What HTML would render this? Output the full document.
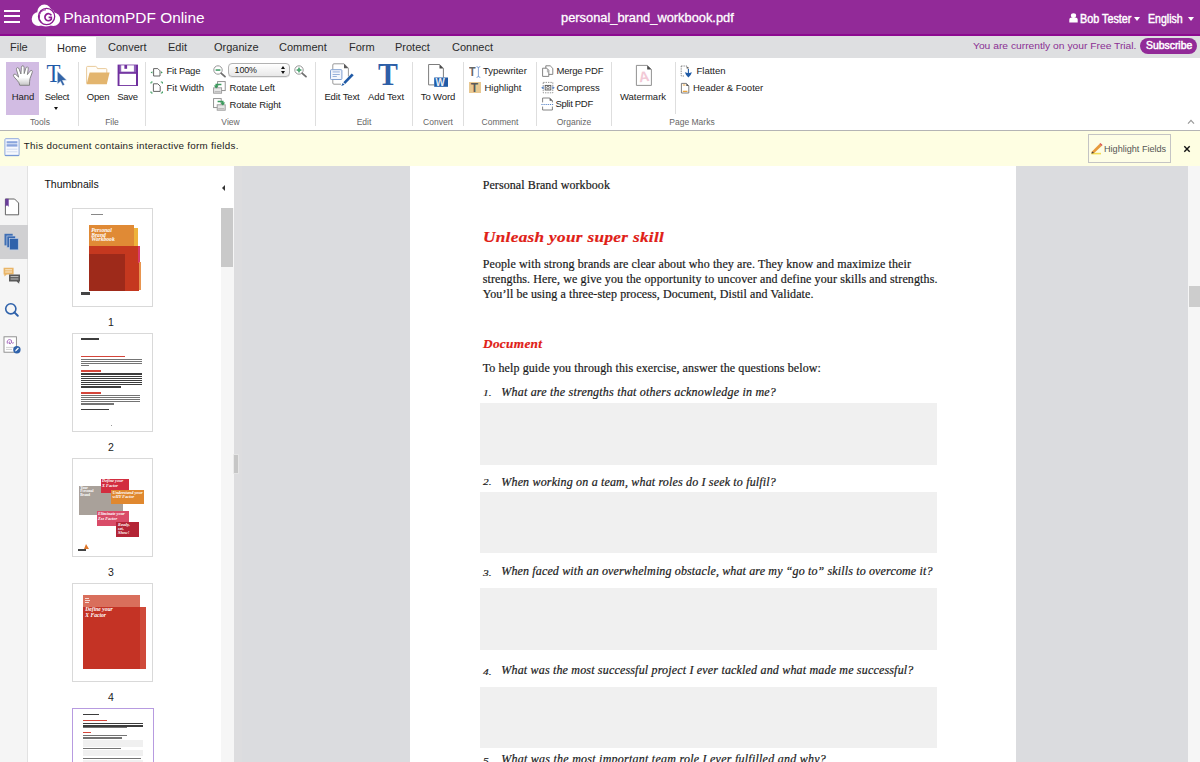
<!DOCTYPE html>
<html>
<head>
<meta charset="utf-8">
<title>PhantomPDF Online</title>
<style>
*{box-sizing:border-box;margin:0;padding:0}
html,body{width:1200px;height:762px;overflow:hidden;background:#fff;font-family:"Liberation Sans",sans-serif;}
.abs{position:absolute}
.t{position:absolute;white-space:nowrap;line-height:1;}
#top{position:absolute;left:0;top:0;width:1200px;height:34px;background:#922a98}
#topline{position:absolute;left:0;top:34px;width:1200px;height:2px;background:#8c0a90}
#tabs{position:absolute;left:0;top:36px;width:1200px;height:22px;background:#dedfe1}
#hometab{position:absolute;left:46px;top:37px;width:50px;height:22px;background:#fff}
.tab{position:absolute;top:41.2px;font-size:10.2px;color:#2b2b2b;white-space:nowrap;line-height:13px;transform:scaleX(1.08);transform-origin:left}
#ribbon{position:absolute;left:0;top:58px;width:1200px;height:72px;background:#fff}
#ribline{position:absolute;left:0;top:130px;width:1200px;height:1px;background:#b4b4b4}
.sep{position:absolute;top:62px;width:1px;height:64px;background:#dedede}
.rl{position:absolute;font-size:9.5px;color:#222;white-space:nowrap;line-height:11px}
.gl{position:absolute;top:117.1px;font-size:8.5px;color:#666;white-space:nowrap;line-height:11px;text-align:center;transform:translateX(-50%)}
.c{transform:translateX(-50%)}
#ybar{position:absolute;left:0;top:131px;width:1200px;height:35px;background:#fefee2}
#strip{position:absolute;left:0;top:166px;width:28px;height:596px;background:#f5f5f5;border-right:1px solid #e2e2e2}
#panel{position:absolute;left:28px;top:166px;width:206px;height:596px;background:#fff}
#docbg{position:absolute;left:234px;top:166px;width:953.5px;height:596px;background:#dbdcdf}
#page{position:absolute;left:410px;top:166px;width:606px;height:596px;background:#fff}
#vscroll{position:absolute;left:1187.5px;top:166px;width:12.5px;height:596px;background:#f6f6f6}
.d{position:absolute;white-space:nowrap;font-family:"Liberation Serif",serif;color:#1a1a1a;line-height:1;-webkit-text-stroke:0.2px currentColor}
.fld{position:absolute;left:479.6px;width:457px;background:#f0f0f0}
.thumb{position:absolute;left:71.5px;width:81.3px;height:99.5px;background:#fff;border:1px solid #d9d9d9}
.tn{position:absolute;left:111px;font-size:10.5px;color:#222;transform:translateX(-50%);line-height:12px}
</style>
</head>
<body>
<!-- TOP HEADER -->
<div id="top"></div>
<div id="topline"></div>
<div id="tabs"></div>
<div id="hometab"></div>
<div id="ribbon"></div>
<div id="ribline"></div>
<div id="ybar"></div>
<div id="strip"></div>
<div id="panel"></div>
<div id="docbg"></div>
<div id="page"></div>
<div id="vscroll"></div>

<!-- hamburger -->
<div class="abs" style="left:4px;top:9.5px;width:16px;height:2px;background:#fff"></div>
<div class="abs" style="left:4px;top:15px;width:16px;height:2px;background:#fff"></div>
<div class="abs" style="left:4px;top:20.5px;width:16px;height:2px;background:#fff"></div>
<!-- logo -->
<svg class="abs" style="left:30px;top:2px" width="32" height="28" viewBox="30 2 32 28">
  <g fill="#fff">
    <circle cx="38.7" cy="19" r="7"/>
    <circle cx="44.4" cy="11.6" r="7"/>
    <circle cx="53.4" cy="19.2" r="6.8"/>
    <circle cx="46.6" cy="16.5" r="8.9"/>
    <ellipse cx="46" cy="20.4" rx="9" ry="6"/>
  </g>
  <ellipse cx="46.6" cy="16.5" rx="8.1" ry="8.2" fill="none" stroke="#8b1b92" stroke-width="1.3"/>
  <path d="M41.6 22.4 A7 7.2 0 0 1 46 9.8" fill="none" stroke="#8b1b92" stroke-width="0.9"/>
  <path d="M51.4 15.4 A3.5 3.5 0 1 0 51.3 19.2 L51.3 17.3 L48.6 17.3" fill="none" stroke="#8b1b92" stroke-width="1.7"/>
</svg>
<div class="t" style="left:63.5px;top:8.5px;font-size:15.4px;color:#fff;line-height:17px">PhantomPDF Online</div>
<div class="t" style="left:561px;top:10px;font-size:12.85px;color:#fff;line-height:15px;-webkit-text-stroke:0.3px #fff">personal_brand_workbook.pdf</div>
<!-- user -->
<svg class="abs" style="left:1069px;top:13px" width="9" height="10" viewBox="0 0 9 11" preserveAspectRatio="none"><circle cx="4.5" cy="2.8" r="2.6" fill="#fff"/><path d="M0.3 10.5 V7.5 Q0.3 5 3 5 H6 Q8.7 5 8.7 7.5 V10.5 Z" fill="#fff"/></svg>
<div class="t" style="left:1080px;top:11.5px;font-size:12px;color:#fff;line-height:14px;-webkit-text-stroke:0.45px #fff;transform:scaleX(0.9);transform-origin:left" id="bob">Bob Tester</div>
<div class="abs" style="left:1134px;top:17px;width:0;height:0;border-left:3.5px solid transparent;border-right:3.5px solid transparent;border-top:4px solid #fff"></div>
<div class="t" style="left:1148px;top:11.5px;font-size:12px;color:#fff;line-height:14px;-webkit-text-stroke:0.45px #fff;transform:scaleX(0.88);transform-origin:left" id="eng">English</div>
<div class="abs" style="left:1188px;top:17px;width:0;height:0;border-left:3.5px solid transparent;border-right:3.5px solid transparent;border-top:4px solid #fff"></div>


<div class="tab" style="left:10px">File</div>
<div class="tab" style="left:56.5px;top:42px">Home</div>
<div class="tab" style="left:107.5px">Convert</div>
<div class="tab" style="left:168px">Edit</div>
<div class="tab" style="left:213.5px">Organize</div>
<div class="tab" style="left:279px">Comment</div>
<div class="tab" style="left:348.5px">Form</div>
<div class="tab" style="left:395px">Protect</div>
<div class="tab" style="left:452px">Connect</div>
<div class="t" style="left:972.5px;top:40.2px;font-size:9.9px;color:#8a2f93;line-height:12px;transform:scaleX(1.04);transform-origin:left">You are currently on your Free Trial.</div>
<div class="abs" style="left:1140px;top:38px;width:57px;height:16px;border-radius:8px;background:#922a98"></div>
<div class="t" style="left:1146px;top:40px;font-size:10.4px;color:#fff;line-height:12px;-webkit-text-stroke:0.5px #fff">Subscribe</div>


<!-- separators -->
<div class="sep" style="left:78px"></div>
<div class="sep" style="left:145px"></div>
<div class="sep" style="left:315px"></div>
<div class="sep" style="left:412px"></div>
<div class="sep" style="left:463px"></div>
<div class="sep" style="left:536px"></div>
<div class="sep" style="left:611px"></div>
<div class="sep" style="left:675px;height:52px"></div>
<!-- Tools -->
<div class="abs" style="left:6px;top:62px;width:33px;height:53px;background:#d2bce3"></div>
<svg class="abs" style="left:12px;top:64px" width="22" height="23" viewBox="12 64 22 23">
  <defs><linearGradient id="hg" x1="0" y1="0" x2="0" y2="1"><stop offset="0.6" stop-color="#ffffff"/><stop offset="1" stop-color="#c4c4c4"/></linearGradient></defs>
  <path d="M19.8 85.3 Q19.2 82.4 17.2 80.4 L14 76.8 Q12.6 74.8 14 74.2 Q15.4 73.8 16.8 75.4 L18.7 77.2 L16.5 69.8 Q16.2 67.8 17.5 67.6 Q18.7 67.6 19.2 69.2 L20.9 74 L21.4 67.4 Q21.6 65.6 22.9 65.7 Q24.1 65.8 24.1 67.6 L24.2 73.6 L25.8 68.2 Q26.4 66.6 27.5 66.9 Q28.6 67.4 28.2 69.2 L27.4 74.6 L30 71.2 Q31 69.9 31.9 70.5 Q32.8 71.2 32.1 72.8 L30 78.6 Q29.4 81.6 29.5 85.3 Z" fill="url(#hg)" stroke="#7d7d7d" stroke-width="0.9" stroke-linejoin="round"/>
</svg>
<div class="rl c" style="left:23px;top:91.4px">Hand</div>
<svg class="abs" style="left:46px;top:64px" width="22" height="23" viewBox="46 64 22 23">
  <text x="0" y="0" transform="translate(46.5,81.6) scale(0.88,1)" font-family="Liberation Serif" font-size="26" fill="#1f5ba8">T</text>
  <path d="M57.3 71 L57.3 84.2 L60.4 81.4 L62.6 85.8 L64.7 84.8 L62.5 80.5 L66.8 80.3 Z" fill="#3465a8" stroke="#fff" stroke-width="0.5"/>
</svg>
<div class="rl c" style="left:57px;top:91.4px;letter-spacing:-0.35px">Select</div>
<div class="abs" style="left:54px;top:107px;width:0;height:0;border-left:2.5px solid transparent;border-right:2.5px solid transparent;border-top:3px solid #111"></div>
<div class="gl" style="left:40px">Tools</div>
<!-- File -->
<svg class="abs" style="left:85px;top:64px" width="26" height="22" viewBox="85 64 26 22">
  <path d="M86.6 83.6 V67.4 Q86.6 66.4 87.6 66.4 H95.6 Q96.4 66.4 96.8 67.2 L97.4 68.6 H105.8 Q106.8 68.6 106.8 69.6 V73" fill="#fffdf8" stroke="#e6c48e" stroke-width="0.9"/>
  <path d="M89.6 72.6 H109.6 L106.8 84.2 H86.6 Z" fill="#e3b56e"/>
</svg>
<div class="rl c" style="left:98px;top:91.4px;letter-spacing:-0.2px">Open</div>
<svg class="abs" style="left:117px;top:64px" width="22" height="23" viewBox="117 64 22 23">
  <rect x="117.6" y="64.6" width="20.4" height="21.4" fill="#6f2f9e"/>
  <rect x="119.5" y="65.2" width="16.5" height="7" fill="#8f62b8"/>
  <rect x="121.2" y="65.4" width="12.7" height="6.2" fill="#fff"/>
  <rect x="124.4" y="65" width="2.7" height="3.8" fill="#6f2f9e"/>
  <rect x="119.5" y="73.8" width="16.5" height="11.3" fill="#fff"/>
</svg>
<div class="rl c" style="left:127.5px;top:91.4px;letter-spacing:-0.3px">Save</div>
<div class="gl" style="left:112px">File</div>
<!-- View -->
<svg class="abs" style="left:150px;top:66px" width="14" height="12" viewBox="0 0 14 12">
  <path d="M3.6 2.6 H7.8 L10 4.8 V10 H3.6 Z" fill="#fff" stroke="#555" stroke-width="0.9"/>
  <path d="M0.6 6.4 L2.4 5.2 V7.6 Z M12.8 6.4 L11 5.2 V7.6 Z" fill="#3a9a5c"/>
</svg>
<div class="rl" style="left:166.5px;top:65.4px;letter-spacing:-0.2px">Fit Page</div>
<svg class="abs" style="left:150px;top:81px" width="14" height="13" viewBox="0 0 14 13">
  <path d="M3.4 2.8 H7.8 L10.2 5.2 V10.4 H3.4 Z" fill="#fff" stroke="#555" stroke-width="0.9"/>
  <path d="M1 1 H2.6 M1 1 V2.6 M12.4 1 H10.8 M12.4 1 V2.6 M1 12 H2.6 M1 12 V10.4 M12.4 12 H10.8 M12.4 12 V10.4" stroke="#3a9a5c" stroke-width="1" fill="none"/>
</svg>
<div class="rl" style="left:166.5px;top:81.6px">Fit Width</div>
<svg class="abs" style="left:212px;top:64px" width="15" height="14" viewBox="0 0 15 14">
  <circle cx="6" cy="6" r="4.2" fill="#fff" stroke="#979797" stroke-width="1"/>
  <path d="M9.3 9.3 L13 12.6" stroke="#707070" stroke-width="1.8" stroke-linecap="round"/>
  <rect x="3.6" y="5.2" width="4.8" height="1.7" fill="#4fa573"/>
</svg>
<div class="abs" style="left:227.8px;top:63px;width:62.4px;height:14px;border:1px solid #b2b2b2;border-radius:4px;background:linear-gradient(#ffffff,#e8e8e8);box-shadow:0 0.5px 0.5px rgba(0,0,0,0.15)"></div>
<div class="rl" style="left:234.6px;top:65px;font-size:8.9px;letter-spacing:-0.1px">100%</div>
<div class="abs" style="left:281.4px;top:66px;width:0;height:0;border-left:2.2px solid transparent;border-right:2.2px solid transparent;border-bottom:3px solid #111"></div>
<div class="abs" style="left:281.4px;top:71px;width:0;height:0;border-left:2.2px solid transparent;border-right:2.2px solid transparent;border-top:3px solid #111"></div>
<svg class="abs" style="left:293px;top:64px" width="15" height="14" viewBox="0 0 15 14">
  <circle cx="6" cy="6" r="4.2" fill="#fff" stroke="#979797" stroke-width="1"/>
  <path d="M9.3 9.3 L13 12.6" stroke="#707070" stroke-width="1.8" stroke-linecap="round"/>
  <rect x="3.6" y="5.2" width="4.8" height="1.7" fill="#4fa573"/>
  <rect x="5.15" y="3.6" width="1.7" height="4.8" fill="#4fa573"/>
</svg>
<svg class="abs" style="left:212.5px;top:81px" width="13" height="13" viewBox="0 0 13 13">
  <rect x="4.6" y="0.6" width="7.6" height="9" fill="#fff" stroke="#888" stroke-width="0.9"/>
  <rect x="0.6" y="6.8" width="8" height="5.4" fill="#e6e6e6" stroke="#999" stroke-width="0.9"/>
  <rect x="1.6" y="10" width="6" height="1.4" fill="#bbb"/>
  <path d="M3.2 6.4 V3.4 H8.4" stroke="#3a9a5c" stroke-width="1.5" fill="none"/>
  <path d="M0.8 4.6 H5.6 L3.2 7.4 Z" fill="#3a9a5c"/>
</svg>
<div class="rl" style="left:229.5px;top:81.6px;letter-spacing:-0.1px">Rotate Left</div>
<svg class="abs" style="left:212.5px;top:98px" width="13" height="13" viewBox="0 0 13 13">
  <rect x="0.6" y="0.6" width="7.6" height="9" fill="#fff" stroke="#888" stroke-width="0.9"/>
  <rect x="4.2" y="6.8" width="8" height="5.4" fill="#e6e6e6" stroke="#999" stroke-width="0.9"/>
  <rect x="5.2" y="10" width="6" height="1.4" fill="#bbb"/>
  <path d="M9.8 6.4 V3.4 H4.6" stroke="#3a9a5c" stroke-width="1.5" fill="none"/>
  <path d="M12.2 4.6 H7.4 L9.8 7.4 Z" fill="#3a9a5c"/>
</svg>
<div class="rl" style="left:229.5px;top:98.8px;letter-spacing:-0.12px">Rotate Right</div>
<div class="gl" style="left:230.5px">View</div>

<!-- Edit -->
<svg class="abs" style="left:329px;top:62px" width="27" height="26" viewBox="329 62 27 26">
  <path d="M332.8 69.4 V65 Q332.8 63.8 334 63.8 H344 L348.4 68.2 V76.4 M332.8 80 V83 Q332.8 84.2 334 84.2 H341" fill="none" stroke="#9a9a9a" stroke-width="1"/>
  <path d="M344 63.8 V68.2 H348.4 Z" fill="#5a5a5a"/>
  <rect x="330.5" y="69.7" width="11.4" height="9.8" rx="0.8" fill="#f3f6fc" stroke="#7f9fd0" stroke-width="1"/>
  <path d="M332.6 71.9 H339.8" stroke="#b4c6e6" stroke-width="1.5"/>
  <path d="M332.6 74.5 H339.8 M332.6 76.5 H336.8" stroke="#7f9fd0" stroke-width="0.8"/>
  <path d="M343.3 82.2 L351.7 73.4 L353.7 75.3 L345.2 84.1 Z" fill="#1f5aa6"/>
  <path d="M342.7 82.9 L344.6 84.7 L341.3 86.1 Z" fill="#1f5aa6"/>
</svg>
<div class="rl c" style="left:342px;top:91.4px;letter-spacing:-0.12px">Edit Text</div>
<div class="abs" style="left:377.5px;top:59.3px;font-family:'Liberation Serif',serif;font-weight:bold;font-size:31px;line-height:32px;color:#2e5fa7;transform:scaleX(0.96);transform-origin:left">T</div>
<div class="rl c" style="left:386px;top:91.4px;letter-spacing:-0.1px">Add Text</div>
<div class="gl" style="left:364px">Edit</div>
<!-- Convert -->
<svg class="abs" style="left:427px;top:63px" width="22" height="25" viewBox="427 63 22 25">
  <path d="M434.2 84.9 H428.6 V64.5 H439.6 L443.4 68.3 V77.5" fill="#fff" stroke="#7d7d7d" stroke-width="1"/>
  <path d="M439.5 64.5 V68.4 H443.4 Z" fill="#4a4a4a"/>
  <rect x="434.2" y="77.5" width="13.8" height="9.3" fill="#1f5aa6"/>
  <text x="435.6" y="86.2" font-family="Liberation Sans" font-weight="bold" font-size="10.4" fill="#e6edf8" transform="translate(435.6 0) scale(0.95 1) translate(-435.6 0)">W</text>
</svg>
<div class="rl c" style="left:438px;top:91.4px;letter-spacing:-0.1px">To Word</div>
<div class="gl" style="left:438px">Convert</div>
<!-- Comment -->
<div class="abs" style="left:469px;top:65.5px;font-size:12px;line-height:12px;color:#666;font-weight:bold;transform:scaleX(0.9);transform-origin:left">T</div>
<svg class="abs" style="left:475.6px;top:65.6px" width="5" height="12" viewBox="0 0 5 12"><path d="M0.5 0.6 Q2.4 0.7 2.4 2 V10 Q2.4 11.3 0.5 11.4 M4.3 0.6 Q2.4 0.7 2.4 2 M2.4 10 Q2.4 11.3 4.3 11.4" fill="none" stroke="#6a92cf" stroke-width="0.8"/></svg>
<div class="rl" style="left:483px;top:65.4px">Typewriter</div>
<div class="abs" style="left:469px;top:81.5px;width:12px;height:11.5px;background:#e8c891"></div>
<div class="abs" style="left:470.7px;top:81.5px;font-size:12px;line-height:12px;color:#5a5a5a;font-weight:bold">T</div>
<div class="rl" style="left:484.5px;top:81.6px">Highlight</div>
<div class="gl" style="left:500px">Comment</div>
<!-- Organize -->
<svg class="abs" style="left:541px;top:64px" width="14" height="14" viewBox="0 0 14 14">
  <path d="M4.8 1.8 H9.2 L11.8 4.4 V10.4 H4.8 Z" fill="#fff" stroke="#777" stroke-width="0.9"/>
  <path d="M1.6 4.2 H5.8 L7.8 6.2 V12.4 H1.6 Z" fill="#fff" stroke="#777" stroke-width="0.9"/>
  <path d="M6.4 5 V8.4" stroke="#999" stroke-width="0.8"/>
</svg>
<div class="rl" style="left:556.5px;top:65.4px;letter-spacing:-0.2px">Merge PDF</div>
<svg class="abs" style="left:541px;top:81px" width="14" height="13" viewBox="0 0 14 13">
  <rect x="2.2" y="1.4" width="9.6" height="10.4" fill="#fff" stroke="#8a8a8a" stroke-width="0.9" stroke-dasharray="1.4 1"/>
  <rect x="4.2" y="4.4" width="5.6" height="4.6" fill="#fff" stroke="#555" stroke-width="0.9"/>
  <circle cx="7" cy="6.7" r="1.3" fill="none" stroke="#555" stroke-width="0.8"/>
  <path d="M0.2 6.7 L2.6 5 V8.4 Z M13.8 6.7 L11.4 5 V8.4 Z" fill="#5b86c8"/>
</svg>
<div class="rl" style="left:556.5px;top:81.6px">Compress</div>
<svg class="abs" style="left:541px;top:96.5px" width="14" height="14" viewBox="0 0 14 14">
  <path d="M1.6 5.4 V1 H8.8 L11.4 3.6 V5.4" fill="#fff" stroke="#777" stroke-width="0.9"/>
  <path d="M8.6 1 V3.8 H11.4 Z" fill="#555"/>
  <path d="M1.6 9.6 V13 H11.4 V9.6" fill="#fff" stroke="#777" stroke-width="0.9"/>
  <path d="M0.4 7.5 H13" stroke="#5b86c8" stroke-width="1" stroke-dasharray="1.2 0.9"/>
</svg>
<div class="rl" style="left:555.5px;top:97.6px;letter-spacing:-0.3px">Split PDF</div>
<div class="gl" style="left:574px">Organize</div>
<!-- Page Marks -->
<svg class="abs" style="left:634px;top:63px" width="20" height="25" viewBox="634 63 20 25">
  <path d="M636.4 65.4 H647.4 L651.4 69.4 V85.4 H636.4 Z" fill="#fff" stroke="#858585" stroke-width="0.9"/>
  <path d="M647.2 65.4 V69.6 H651.4 Z" fill="#4a4a4a"/>
  <text x="638.6" y="81.8" font-family="Liberation Sans" font-weight="bold" font-size="14.5" fill="#f2c9d6" transform="rotate(-8 643 76)">A</text>
</svg>
<div class="rl c" style="left:643px;top:91.4px">Watermark</div>
<svg class="abs" style="left:680px;top:64px" width="13" height="15" viewBox="680 64 13 15">
  <path d="M681.2 66 H686.6 L688.8 68.2 M681.2 66 V76 H685" fill="none" stroke="#777" stroke-width="0.9" stroke-dasharray="1.3 1"/>
  <path d="M686.6 66 V68.4 H688.9 Z" fill="#555"/>
  <path d="M688.4 69 V74" stroke="#1f5aa6" stroke-width="1.1"/>
  <path d="M684.9 72.2 L688.4 73.2 L691.9 72.2 Q691 75.4 688.4 77.6 Q685.8 75.4 684.9 72.2 Z" fill="#1f5aa6"/>
</svg>
<div class="rl" style="left:696.5px;top:65.4px">Flatten</div>
<svg class="abs" style="left:680px;top:81.5px" width="10" height="13" viewBox="680 81.5 10 13">
  <path d="M681.4 82.9 H686.4 L688.8 85.3 V92.5 H681.4 Z" fill="#fff" stroke="#707070" stroke-width="0.9"/>
  <path d="M686.3 82.9 V85.4 H688.8 Z" fill="#555"/>
  <path d="M682.8 84.5 H685.4 M682.8 90.8 H687.4" stroke="#e8a23a" stroke-width="1.2"/>
</svg>
<div class="rl" style="left:693px;top:82px">Header &amp; Footer</div>
<div class="gl" style="left:692px">Page Marks</div>
<!-- collapse chevron -->
<svg class="abs" style="left:1187px;top:119px" width="8" height="6" viewBox="0 0 8 6"><path d="M1 4.6 L4 1.4 L7 4.6" fill="none" stroke="#999" stroke-width="1.2"/></svg>


<svg class="abs" style="left:3.5px;top:137.5px" width="16" height="19" viewBox="0 0 16 19">
  <rect x="0.9" y="0.7" width="14.2" height="17" rx="0.9" fill="#f6f8fd" stroke="#90a9de" stroke-width="1"/>
  <path d="M0.9 17.4 H15.1" stroke="#7797d6" stroke-width="1.1"/>
  <rect x="2.6" y="3.2" width="10.8" height="2.2" fill="#8aa5dd"/>
  <rect x="2.6" y="6.2" width="10.8" height="2.4" fill="#8aa5dd"/>
  <path d="M2.6 11.2 H13.4 M2.6 13.8 H13.4" stroke="#d3dcf0" stroke-width="1"/>
</svg>
<div class="t" style="left:23.8px;top:140.4px;font-size:9.8px;letter-spacing:0.285px;color:#1a1a1a;line-height:12px" id="ytxt">This document contains interactive form fields.</div>
<div class="abs" style="left:1088px;top:134px;width:83px;height:28.6px;border:1px solid #c4c4c4;background:#fdfde6"></div>
<svg class="abs" style="left:1090px;top:142px" width="14" height="14" viewBox="0 0 14 14">
  <path d="M1.4 11.6 H11" stroke="#f2dc52" stroke-width="1.6"/>
  <path d="M2 9.6 L9.4 2 L11.6 4 L4.2 11 L1.4 11.4 Z" fill="#e79a3c"/>
  <path d="M9.4 2 L10.4 1 L12.6 3 L11.6 4 Z" fill="#d9534f"/>
  <path d="M2 9.6 L4.2 11 L1.4 11.4 Z" fill="#444"/>
</svg>
<div class="t" style="left:1104px;top:143.5px;font-size:9.1px;color:#555;line-height:11px">Highlight Fields</div>
<svg class="abs" style="left:1183px;top:144.6px" width="8" height="8" viewBox="0 0 8 8"><path d="M1.3 1.3 L6.7 6.7 M6.7 1.3 L1.3 6.7" stroke="#111" stroke-width="1.4"/></svg>


<!-- strip icons -->
<svg class="abs" style="left:4px;top:198px" width="16" height="18" viewBox="0 0 16 18">
  <path d="M1.4 1 H10.6 L14.6 5 V16.8 H1.4 Z" fill="#fff" stroke="#555" stroke-width="0.9"/>
  <path d="M1.3 0.8 H4.7 V8.8 L3 7.2 L1.3 8.8 Z" fill="#6a3d9a"/>
</svg>
<div class="abs" style="left:0;top:225px;width:28px;height:34px;background:#d0d0d2"></div>
<svg class="abs" style="left:4px;top:232px" width="16" height="19" viewBox="4 232 16 19">
  <rect x="4.5" y="233.8" width="8.2" height="11.6" fill="#3f6fb4"/>
  <rect x="6.9" y="236" width="8.6" height="11.6" fill="#3868af" stroke="#c3d0e6" stroke-width="0.7"/>
  <rect x="9.5" y="238.4" width="8.8" height="11.5" fill="#2f62ab" stroke="#c3d0e6" stroke-width="0.7"/>
</svg>
<svg class="abs" style="left:3px;top:267px" width="18" height="18" viewBox="0 0 18 18">
  <path d="M0.6 0.8 H10.6 V7.4 H3.8 L1.4 9.6 V7.4 H0.6 Z" fill="#e9b567"/>
  <path d="M2.2 2.8 H9 M2.2 5 H9" stroke="#fdf1dc" stroke-width="0.9"/>
  <path d="M6 7.4 H17 V14.4 H16.2 V16.8 L13.6 14.4 H6 Z" fill="#5a5a5a"/>
  <path d="M7.6 9.6 H15.4 M7.6 12 H15.4" stroke="#cfcfcf" stroke-width="0.9"/>
</svg>
<svg class="abs" style="left:4px;top:302px" width="16" height="16" viewBox="0 0 16 16">
  <circle cx="6.8" cy="6.8" r="5.1" fill="none" stroke="#2f62ab" stroke-width="1.6"/>
  <path d="M10.4 10.4 L13.8 13.8" stroke="#2f62ab" stroke-width="2" stroke-linecap="round"/>
</svg>
<svg class="abs" style="left:3px;top:335.8px" width="19" height="19" viewBox="0 0 19 19">
  <rect x="1" y="0.8" width="12.4" height="15.4" fill="#fff" stroke="#888" stroke-width="0.9"/>
  <path d="M4.4 7.6 Q3.4 4 6.6 3.6 Q9.4 3.6 8.4 6.4 Q7.4 8.6 6 7.4 Q5.4 6 7 5.8 M8.4 6.4 Q10 8 10.8 6.6" fill="none" stroke="#9b59b6" stroke-width="0.9"/>
  <path d="M3 11.4 H11 M3 13.4 H9" stroke="#ccc" stroke-width="0.9"/>
  <circle cx="13.9" cy="13.7" r="3.7" fill="#2f62ab"/>
  <path d="M12.1 15.5 L12.5 14.1 L15 11.6 L15.9 12.5 L13.4 15 Z" fill="#fff"/>
</svg>


<div class="t" style="left:44.4px;top:178px;font-size:10.5px;color:#111;line-height:12px">Thumbnails</div>
<div class="abs" style="left:222px;top:184.5px;width:0;height:0;border-top:3px solid transparent;border-bottom:3px solid transparent;border-right:3.5px solid #333"></div>
<div class="abs" style="left:221px;top:207.5px;width:13px;height:555px;background:#f6f6f6"></div>
<div class="abs" style="left:221px;top:207.5px;width:12px;height:59px;background:#c9c9c9"></div>
<!-- splitter handle -->
<div class="abs" style="left:234px;top:166px;width:7.5px;height:596px;background:#dddddf"></div>
<div class="abs" style="left:234px;top:455.4px;width:3.9px;height:17.8px;background:#c6c6c6;box-shadow:0 0 0 0.8px #e6e6e6"></div>
<!-- thumb 1 -->
<div class="thumb" style="top:207.5px">
  <div class="abs" style="left:18.2px;top:5px;width:12px;height:1px;background:#888"></div>
  <div class="abs" style="left:16.2px;top:16px;width:45px;height:24px;background:#e08a35"></div>
  <div class="abs" style="left:61.2px;top:19px;width:4px;height:21px;background:#eeb23a"></div>
  <div class="abs" style="left:16.2px;top:37px;width:50px;height:45px;background:#c5381f"></div>
  <div class="abs" style="left:65.2px;top:37px;width:2px;height:17px;background:#d83a6a"></div>
  <div class="abs" style="left:66.2px;top:53px;width:2.3px;height:28px;background:#e8954f"></div>
  <div class="abs" style="left:16.2px;top:45px;width:36px;height:37px;background:#9e2a1a"></div>
  <div class="abs" style="left:18.7px;top:19.4px;font-family:'Liberation Serif',serif;font-weight:bold;font-style:italic;font-size:5.6px;line-height:4.8px;color:#fff;white-space:nowrap">Personal<br>Brand<br>Workbook</div>
  <div class="abs" style="left:8.2px;top:83px;width:9px;height:3px;background:#444"></div>
</div>
<div class="tn" style="top:316px">1</div>
<!-- thumb 2 -->
<div class="thumb" style="top:332.5px" id="th2">
  <div class="abs" style="left:8.8px;top:4.9px;width:17.3px;height:1.2px;background:#3c3c3c"></div>
  <div class="abs" style="left:8.8px;top:22.4px;width:43.3px;height:1.3px;background:#d4453a"></div>
  <div class="abs" style="left:8.8px;top:25.0px;width:60.5px;height:1.3px;background:#747474"></div>
  <div class="abs" style="left:8.8px;top:27.0px;width:60.5px;height:1.3px;background:#747474"></div>
  <div class="abs" style="left:8.8px;top:29.0px;width:60.5px;height:1.3px;background:#747474"></div>
  <div class="abs" style="left:8.8px;top:31.0px;width:7.8px;height:1.3px;background:#747474"></div>
  <div class="abs" style="left:8.8px;top:36.9px;width:20.0px;height:1.3px;background:#d4453a"></div>
  <div class="abs" style="left:8.8px;top:39.9px;width:60.5px;height:1.5px;background:#3c3c3c"></div>
  <div class="abs" style="left:8.8px;top:42.0px;width:60.5px;height:1.5px;background:#3c3c3c"></div>
  <div class="abs" style="left:8.8px;top:44.0px;width:60.5px;height:1.5px;background:#3c3c3c"></div>
  <div class="abs" style="left:8.8px;top:46.1px;width:60.5px;height:1.5px;background:#3c3c3c"></div>
  <div class="abs" style="left:8.8px;top:48.2px;width:60.5px;height:1.5px;background:#3c3c3c"></div>
  <div class="abs" style="left:8.8px;top:50.4px;width:60.5px;height:1.5px;background:#3c3c3c"></div>
  <div class="abs" style="left:8.8px;top:52.5px;width:40.1px;height:1.5px;background:#3c3c3c"></div>
  <div class="abs" style="left:8.8px;top:58.9px;width:20.0px;height:1.3px;background:#d4453a"></div>
  <div class="abs" style="left:8.8px;top:61.6px;width:59.0px;height:1.3px;background:#747474"></div>
  <div class="abs" style="left:8.8px;top:63.6px;width:59.0px;height:1.3px;background:#747474"></div>
  <div class="abs" style="left:8.8px;top:65.6px;width:59.0px;height:1.3px;background:#747474"></div>
  <div class="abs" style="left:8.8px;top:67.6px;width:59.0px;height:1.3px;background:#747474"></div>
  <div class="abs" style="left:8.8px;top:69.8px;width:33.0px;height:1.3px;background:#747474"></div>
  <div class="abs" style="left:8.8px;top:75.3px;width:27.8px;height:1.4px;background:#3c3c3c"></div>
  <div class="abs" style="left:38.6px;top:91.2px;width:1.2px;height:1.2px;background:#999"></div>
</div>
<div class="tn" style="top:441px">2</div>
<!-- thumb 3 -->
<div class="thumb" style="top:457.5px">
  <div class="abs" style="left:6.1px;top:27px;width:44px;height:29px;background:#a9a19a"></div>
  <div class="abs" style="left:28.1px;top:20px;width:28px;height:14px;background:#d22d3f"></div>
  <div class="abs" style="left:38.1px;top:31px;width:33px;height:14px;background:#e0882f"></div>
  <div class="abs" style="left:24.1px;top:52px;width:32px;height:15px;background:#d94c68"></div>
  <div class="abs" style="left:43.1px;top:63px;width:23px;height:15px;background:#b32435"></div>
  <div class="abs" style="left:29.6px;top:20.8px;font-size:4.3px;line-height:4.7px;font-family:'Liberation Serif',serif;font-weight:bold;font-style:italic;color:#fff;white-space:nowrap;">Define your<br>X Factor</div>
  <div class="abs" style="left:40.1px;top:32px;font-size:4.3px;line-height:4.7px;font-family:'Liberation Serif',serif;font-weight:bold;font-style:italic;color:#fff;white-space:nowrap;">Understand your<br>wHY Factor</div>
  <div class="abs" style="left:25.6px;top:53.6px;font-size:4.3px;line-height:4.7px;font-family:'Liberation Serif',serif;font-weight:bold;font-style:italic;color:#fff;white-space:nowrap;">Eliminate your<br>Zzz Factor</div>
  <div class="abs" style="left:45.6px;top:64.6px;font-size:4.2px;line-height:4px;font-family:'Liberation Serif',serif;font-weight:bold;font-style:italic;color:#fff;white-space:nowrap;">Ready,<br>set,<br>Show!</div>
  <div class="abs" style="left:7.7px;top:28.2px;font-size:3.6px;line-height:3.4px;font-family:'Liberation Serif',serif;font-weight:bold;font-style:italic;color:#fff;white-space:nowrap;;font-style:normal">Your<br>Personal<br>Brand</div>
  <div class="abs" style="left:11.1px;top:85px;width:0;height:0;border-left:2.1px solid transparent;border-right:3px solid transparent;border-bottom:5px solid #e0782a"></div>
  <div class="abs" style="left:5.1px;top:90.5px;width:8px;height:2.4px;background:#444"></div>
</div>
<div class="tn" style="top:566px">3</div>
<!-- thumb 4 -->
<div class="thumb" style="top:582.5px">
  <div class="abs" style="left:10.5px;top:11.8px;width:57.4px;height:73.7px;background:#d96f5c"></div>
  <div class="abs" style="left:67.5px;top:23.5px;width:6.2px;height:61.5px;background:#cf4a3a"></div>
  <div class="abs" style="left:10.5px;top:23.5px;width:57.4px;height:62px;background:#c43325"></div>
  <div class="abs" style="left:12.6px;top:14.2px;width:4px;height:1.1px;background:#f6d9d3"></div>
  <div class="abs" style="left:12.6px;top:16.2px;width:5px;height:1.1px;background:#f6d9d3"></div>
  <div class="abs" style="left:12.6px;top:18.2px;width:3.6px;height:1.1px;background:#f6d9d3"></div>
  <div class="abs" style="left:12.8px;top:23.8px;font-size:5.6px;line-height:5.2px;font-family:'Liberation Serif',serif;font-weight:bold;font-style:italic;color:#fff;white-space:nowrap;">Define your<br>X Factor</div>
</div>
<div class="tn" style="top:691px">4</div>
<!-- thumb 5 (selected) -->
<div class="thumb" style="top:707.5px;left:71.5px;width:82.3px;border:1.5px solid #b79be0" id="th5">
  <div class="abs" style="left:10.4px;top:5.3px;width:16.6px;height:1.2px;background:#3c3c3c"></div>
  <div class="abs" style="left:10.4px;top:11.0px;width:23.9px;height:1.4px;background:#d4453a"></div>
  <div class="abs" style="left:10.4px;top:14.7px;width:60.3px;height:1.3px;background:#3c3c3c"></div>
  <div class="abs" style="left:10.4px;top:16.9px;width:60.3px;height:1.3px;background:#3c3c3c"></div>
  <div class="abs" style="left:10.4px;top:18.7px;width:44.6px;height:1.2px;background:#747474"></div>
  <div class="abs" style="left:10.4px;top:23.7px;width:8.6px;height:1.2px;background:#d4453a"></div>
  <div class="abs" style="left:10.4px;top:26.0px;width:44.3px;height:1.2px;background:#747474"></div>
  <div class="abs" style="left:10.4px;top:28.9px;width:39.3px;height:1.2px;background:#747474"></div>
  <div class="abs" style="left:10.4px;top:31.5px;width:60.3px;height:6.5px;background:#f0f0f0"></div>
  <div class="abs" style="left:10.4px;top:39.4px;width:38.6px;height:1.2px;background:#747474"></div>
  <div class="abs" style="left:10.4px;top:41.7px;width:60.3px;height:6.2px;background:#f0f0f0"></div>
  <div class="abs" style="left:10.4px;top:49.3px;width:58.6px;height:1.2px;background:#747474"></div>
  <div class="abs" style="left:10.4px;top:51.8px;width:60.3px;height:6.2px;background:#f0f0f0"></div>
</div>


<div class="d" id="l0" style="left:482.7px;top:179.25px;font-size:12px;letter-spacing:0.086px">Personal Brand workbook</div>
<div class="d" id="l1" style="left:482.7px;top:230.3px;font-size:14.8px;letter-spacing:0.3px;transform:scaleX(1.158);transform-origin:left;font-weight:bold;font-style:italic;color:#e02016">Unleash your super skill</div>
<div class="d" id="p1" style="left:482.7px;top:258.45px;font-size:12px;letter-spacing:0.107px">People with strong brands are clear about who they are. They know and maximize their</div>
<div class="d" id="p2" style="left:482.7px;top:273.20px;font-size:12px;letter-spacing:0.114px">strengths. Here, we give you the opportunity to uncover and define your skills and strengths.</div>
<div class="d" id="p3" style="left:482.7px;top:287.95px;font-size:12px;letter-spacing:0.083px">You’ll be using a three-step process, Document, Distil and Validate.</div>
<div class="d" id="l2" style="left:482.7px;top:337.5px;font-size:12.2px;letter-spacing:0.3px;transform:scaleX(1.088);transform-origin:left;font-weight:bold;font-style:italic;color:#e02016">Document</div>
<div class="d" id="l3" style="left:482.7px;top:362.25px;font-size:12px;letter-spacing:0.101px">To help guide you through this exercise, answer the questions below:</div>
<div class="d" id="n1" style="left:482.7px;top:387.61px;font-size:10.5px;transform:scale(1.08,0.8);transform-origin:0 8.79px;font-style:italic">1.</div>
<div class="d" id="q1" style="left:501.3px;top:386.35px;font-size:12px;font-style:italic;letter-spacing:0.207px">What are the strengths that others acknowledge in me?</div>
<div class="fld" style="top:403.2px;height:61.4px"></div>
<div class="d" id="n2" style="left:482.7px;top:476.91px;font-size:10.5px;transform:scale(1.08,0.8);transform-origin:0 8.79px;font-style:italic">2.</div>
<div class="d" id="q2" style="left:501.3px;top:475.65px;font-size:12px;font-style:italic;letter-spacing:0.167px">When working on a team, what roles do I seek to fulfil?</div>
<div class="fld" style="top:491.8px;height:61.6px"></div>
<div class="d" id="n3" style="left:482.7px;top:568.41px;font-size:10.5px;transform:scale(1.08,0.8);transform-origin:0 8.79px;font-style:italic">3.</div>
<div class="d" id="q3" style="left:501.3px;top:565.35px;font-size:12px;font-style:italic;letter-spacing:0.141px">When faced with an overwhelming obstacle, what are my “go to” skills to overcome it?</div>
<div class="fld" style="top:588.1px;height:61.8px"></div>
<div class="d" id="n4" style="left:482.7px;top:667.11px;font-size:10.5px;transform:scale(1.08,0.8);transform-origin:0 8.79px;font-style:italic">4.</div>
<div class="d" id="q4" style="left:501.3px;top:664.05px;font-size:12px;font-style:italic;letter-spacing:0.180px">What was the most successful project I ever tackled and what made me successful?</div>
<div class="fld" style="top:686.9px;height:61.1px"></div>
<div class="d" id="n5" style="left:482.7px;top:755.91px;font-size:10.5px;transform:scale(1.08,0.8);transform-origin:0 8.79px;font-style:italic">5.</div>
<div class="d" id="q5" style="left:501.3px;top:752.85px;font-size:12px;font-style:italic;letter-spacing:0.246px">What was the most important team role I ever fulfilled and why?</div>
<!-- main scrollbar thumb -->
<div class="abs" style="left:1189px;top:286px;width:11px;height:20.5px;background:#cdcdcd"></div>

</body>
</html>
